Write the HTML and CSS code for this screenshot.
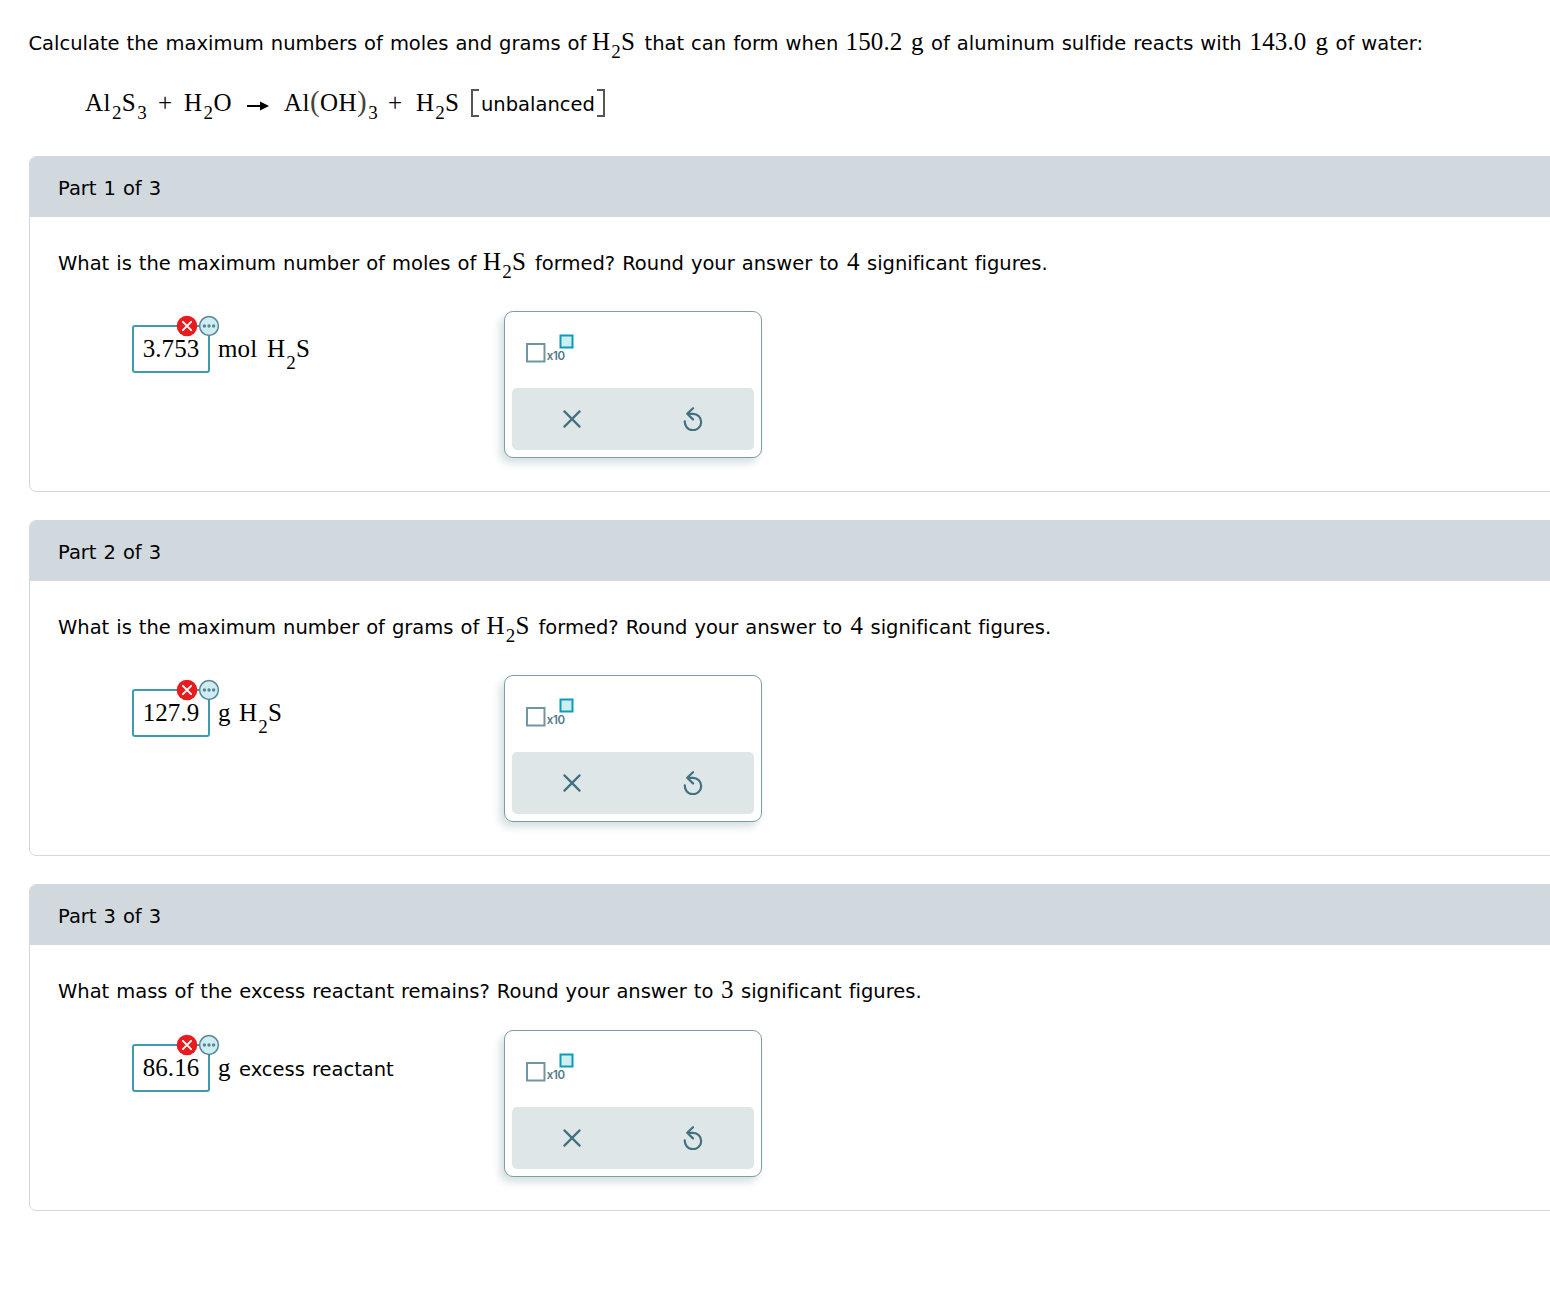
FILE: index.html
```html
<!DOCTYPE html>
<html lang="en">
<head>
<meta charset="utf-8">
<title>Limiting reactant problem</title>
<link rel="stylesheet" href="styles.css">
</head>
<body>
<svg width="0" height="0" class="defs">
  <symbol id="wrong" viewBox="0 0 22 22"><circle cx="11" cy="11" r="10.3" fill="#e81c1f"/><path d="M6.9 6.9l8.2 8.2M15.1 6.9l-8.2 8.2" stroke="#fff" stroke-width="2" stroke-linecap="round"/></symbol>
  <symbol id="more" viewBox="0 0 22 22"><circle cx="11" cy="11" r="9.4" fill="#cfecf1" stroke="#568799" stroke-width="1.5"/><g fill="#568799"><circle cx="6.4" cy="11" r="1.7"/><circle cx="11" cy="11" r="1.7"/><circle cx="15.6" cy="11" r="1.7"/></g></symbol>
  <symbol id="boxes" viewBox="0 0 50 30"><rect x="2" y="10" width="17.5" height="17.5" fill="#fff" stroke="#7296a0" stroke-width="2"/><rect x="35.5" y="1.5" width="12" height="12" fill="#cdeef3" stroke="#0b9db8" stroke-width="2"/></symbol>
  <symbol id="clear" viewBox="0 0 20 20"><path d="M2.4 2.4l15.2 15.2M17.6 2.4L2.4 17.6" stroke="#41707f" stroke-width="2.2" stroke-linecap="round"/></symbol>
  <symbol id="reset" viewBox="0 0 20 25"><path d="M1.8 15.4A8.2 8.2 0 1 0 10 7.8H4.4M10 2.2L4.2 7.8l5.8 5.6" fill="none" stroke="#41707f" stroke-width="2.2" stroke-linecap="round" stroke-linejoin="round"/></symbol>
</svg>
<main>
  <p class="line intro"><span class="t1">Calculate the maximum numbers of moles and grams of</span><span class="m t2">H<sub>2</sub>S</span><span class="t3">that can form when</span><span class="m t4">150.2</span><span class="m t5">g</span><span class="t6">of aluminum sulfide reacts with</span><span class="m t7">143.0</span><span class="m t8">g</span><span class="t9">of water:</span></p>
  <p class="line equation"><span class="m e1">Al<sub>2</sub>S<sub>3</sub></span><span class="m e2">+</span><span class="m e3">H<sub>2</sub>O</span><svg class="arrow" viewBox="0 0 22 10"><path d="M0 5h15" stroke="#000" stroke-width="2"/><path d="M13 .6l9 4.4-9 4.4z"/></svg><span class="m e4">Al<span class="paren">(</span>OH<span class="paren">)</span><sub>3</sub></span><span class="m e5">+</span><span class="m e6">H<sub>2</sub>S</span><span class="bracket"></span><span class="e7">unbalanced</span><span class="bracket close"></span></p>

  <section class="card">
    <h2>Part 1 of 3</h2>
    <p class="line question"><span class="q1">What is the maximum number of moles of</span><span class="m q2">H<sub>2</sub>S</span><span class="q3">formed? Round your answer to</span><span class="m q4">4</span><span class="q5">significant figures.</span></p>
    <div class="work">
      <div class="answer"><div class="field">3.753<div class="badges"><svg><use href="#wrong"/></svg><svg><use href="#more"/></svg></div></div><div class="line unit"><span class="m u1">mol</span><span class="m low">H<sub>2</sub>S</span></div></div>
      <div class="panel"><svg class="sci"><use href="#boxes"/><text x="21.8" y="26" class="times-ten">x10</text></svg><div class="tools"><svg class="clear"><use href="#clear"/></svg><svg class="reset"><use href="#reset"/></svg></div></div>
    </div>
  </section>

  <section class="card">
    <h2>Part 2 of 3</h2>
    <p class="line question"><span class="q1 grams">What is the maximum number of grams of</span><span class="m q2">H<sub>2</sub>S</span><span class="q3">formed? Round your answer to</span><span class="m q4">4</span><span class="q5">significant figures.</span></p>
    <div class="work">
      <div class="answer"><div class="field">127.9<div class="badges"><svg><use href="#wrong"/></svg><svg><use href="#more"/></svg></div></div><div class="line unit"><span class="m u2">g</span><span class="m low">H<sub>2</sub>S</span></div></div>
      <div class="panel"><svg class="sci"><use href="#boxes"/><text x="21.8" y="26" class="times-ten">x10</text></svg><div class="tools"><svg class="clear"><use href="#clear"/></svg><svg class="reset"><use href="#reset"/></svg></div></div>
    </div>
  </section>

  <section class="card short">
    <h2>Part 3 of 3</h2>
    <p class="line question"><span class="q6">What mass of the excess reactant remains? Round your answer to</span><span class="m q4">3</span><span class="q5">significant figures.</span></p>
    <div class="work">
      <div class="answer"><div class="field">86.16<div class="badges"><svg><use href="#wrong"/></svg><svg><use href="#more"/></svg></div></div><div class="line unit"><span class="m u2">g</span><span class="excess">excess reactant</span></div></div>
      <div class="panel"><svg class="sci"><use href="#boxes"/><text x="21.8" y="26" class="times-ten">x10</text></svg><div class="tools"><svg class="clear"><use href="#clear"/></svg><svg class="reset"><use href="#reset"/></svg></div></div>
    </div>
  </section>
</main>
</body>
</html>
```
FILE: styles.css
```css
* { box-sizing: border-box; }
body { margin: 0; background: #fff; color: #000; font: 19.5px/30px Verdana, "DejaVu Sans", sans-serif; word-spacing: .8px; font-variant-ligatures: none; overflow-x: hidden; }
main { width: 1600px; padding: 27px 0 0 28.5px; }
.defs { display: block; height: 0; }
.line { display: flex; align-items: baseline; margin: 0; height: 30px; line-height: 30px; white-space: pre; }
.line > span { flex: none; }
.m { font-family: "Liberation Serif", "Times New Roman", serif; font-size: 25px; letter-spacing: .15px; }
sub { font-size: 19px; line-height: 0; vertical-align: -8px; margin-left: 1px; }

.t1 { width: 563.5px; }
.t2 { width: 52.5px; }
.t3 { width: 201px; }
.t4 { width: 65.5px; }
.t5 { width: 20px; }
.t6 { width: 318.5px; }
.t7 { width: 66px; }
.t8 { width: 20px; }

.equation { margin: 31px 0 0 56.5px; height: 38px; }
.e1 { width: 73px; }
.e2 { width: 26px; }
.e3 { width: 63px; }
.arrow { flex: none; width: 22px; height: 10px; margin-right: 15px; position: relative; top: -.5px; }
.e4 { width: 104px; }
.e5 { width: 28px; }
.e6 { width: 55px; }
.e1, .e3, .e4 { letter-spacing: .45px; }
.paren { font-size: 29px; line-height: 0; color: #444; }
.bracket { align-self: flex-start; width: 8px; height: 28px; margin: 1px 2px 0 0; border: 2px solid #555; border-right: 0; }
.bracket.close { margin: 1px 0 0 2px; border: 2px solid #555; border-left: 0; }

.card { height: 336px; margin: 30px 0 28px; border: 1.5px solid #d1d9df; border-radius: 7px; overflow: hidden; }
.card ~ .card { margin-top: 0; }
.card.short { height: 327px; }
h2 { margin: 0; height: 59.5px; padding: 2px 0 0 28.5px; line-height: 60px; font-size: inherit; font-weight: 400; background: #d1d9df; }
.question { margin: 30.5px 0 0 28.5px; }
.q1 { width: 425px; }
.q1.grams { width: 428.5px; }
.q2 { width: 52px; }
.q3 { width: 312px; }
.q4 { width: 20px; }
.q6 { width: 663px; }

.work { display: flex; margin: 34px 0 0 102.5px; }
.short .work { margin-top: 25px; }
.answer { display: flex; width: 371.5px; padding-top: 14px; }
.field { position: relative; flex: none; width: 78px; height: 48px; border: 2px solid #3d9bab; border-radius: 3px; text-align: center; font: 25px/43px "Liberation Serif", serif; letter-spacing: .1px; }
.badges { position: absolute; display: flex; top: -12px; left: 42px; }
.badges svg { width: 22px; height: 22px; }
.unit { margin: 9px 0 0 8px; }
.u1 { width: 49px; }
.u2 { width: 21px; }
.low sub { vertical-align: -12px; }
.panel { width: 258px; height: 147px; padding: 22px 7px 7px; border: 1.5px solid #7d9ea8; border-radius: 9px; box-shadow: -4px 5px 8px #d5dfe2; background: #fff; }
.sci { display: block; width: 50px; height: 30px; margin-left: 13.5px; }
.times-ten { font: 600 11.5px Inter, sans-serif; fill: #50798a; letter-spacing: -.3px; }
.tools { display: flex; align-items: center; justify-content: space-around; height: 61.5px; margin-top: 24px; border-radius: 5px; background: #dfe6e8; }
.clear { width: 20px; height: 20px; }
.reset { width: 20px; height: 25px; }
```
